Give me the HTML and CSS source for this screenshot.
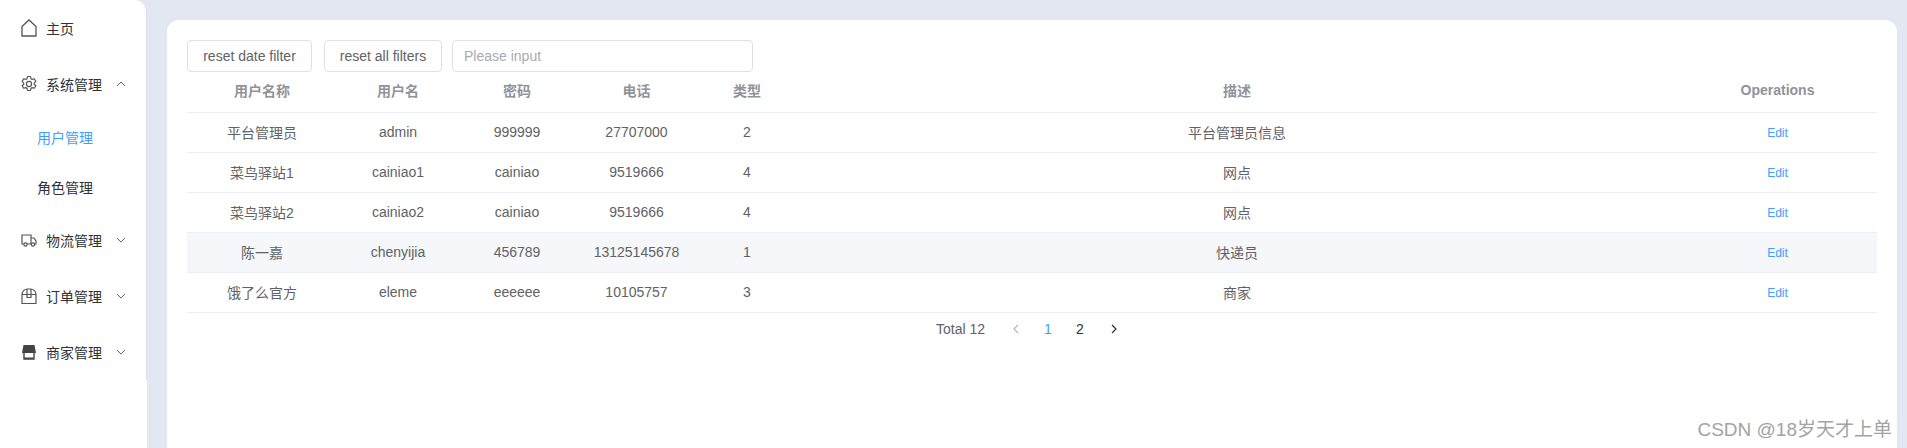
FILE: index.html
```html
<!DOCTYPE html>
<html lang="zh">
<head>
<meta charset="utf-8">
<title>用户管理</title>
<link rel="stylesheet" href="styles.css">
</head>
<body>
<div class="app">
  <aside class="side">
    <nav class="menu">
      <a class="item home">
        <svg class="ico" viewBox="0 0 16 18"><path d="M1 7.500 8 1l7 6.500V17H1z" fill="none" stroke="#555" stroke-width="1.300"/></svg>
        <span>主页</span>
      </a>
      <a class="item sys">
        <svg class="ico" viewBox="0.500 0.500 15 15"><path d="M6.600 1h2.800l.4 2 1.200.7 2-.6 1.400 2.400-1.500 1.400v1.300l1.500 1.400-1.400 2.400-2-.6-1.200.7-.4 2H6.600l-.4-2-1.200-.7-2 .6-1.400-2.400 1.500-1.400V7.200L1.600 5.500 3 3.100l2 .6 1.200-.7z" fill="none" stroke="#555" stroke-width="1.100" stroke-linejoin="round"/><circle cx="8" cy="8" r="2.400" fill="none" stroke="#555" stroke-width="1.100"/></svg>
        <span>系统管理</span>
        <svg class="arrow" viewBox="0 0 10 6"><path d="M1 5l4-4 4 4" fill="none" stroke="#666" stroke-width="1"/></svg>
      </a>
      <a class="sub active">用户管理</a>
      <a class="sub">角色管理</a>
      <a class="item log">
        <svg class="ico" viewBox="0 0 16 14"><path d="M3 11H1V2h9v9H6M10 5h3l2 3v3h-1.500M10 11h1" fill="none" stroke="#555" stroke-width="1.200"/><circle cx="4.500" cy="11.500" r="1.600" fill="none" stroke="#555" stroke-width="1.200"/><circle cx="12" cy="11.500" r="1.600" fill="none" stroke="#555" stroke-width="1.200"/></svg>
        <span>物流管理</span>
        <svg class="arrow" viewBox="0 0 10 6"><path d="M1 1l4 4 4-4" fill="none" stroke="#666" stroke-width="1"/></svg>
      </a>
      <a class="item ord">
        <svg class="ico" viewBox="0 0 16 17"><path d="M1 7a5.500 5.500 0 0 1 5.500-5.500h3A5.500 5.500 0 0 1 15 7v9H1zM1 7h14M6 1.500V10h4V1.500" fill="none" stroke="#555" stroke-width="1.200"/></svg>
        <span>订单管理</span>
        <svg class="arrow" viewBox="0 0 10 6"><path d="M1 1l4 4 4-4" fill="none" stroke="#666" stroke-width="1"/></svg>
      </a>
      <a class="item shop">
        <svg class="ico" viewBox="0 0 16 16"><path d="M2.500 1h11l1.500 8H1z" fill="#444"/><path d="M3 9v6h10V9" fill="none" stroke="#444" stroke-width="1.400"/><path d="M3 13.500h10V15H3z" fill="#444"/></svg>
        <span>商家管理</span>
        <svg class="arrow" viewBox="0 0 10 6"><path d="M1 1l4 4 4-4" fill="none" stroke="#666" stroke-width="1"/></svg>
      </a>
    </nav>
  </aside>
  <main class="main">
    <section class="card">
      <div class="toolbar">
        <button class="btn b1">reset date filter</button>
        <button class="btn b2">reset all filters</button>
        <input class="search" placeholder="Please input">
      </div>
      <table class="grid">
        <colgroup>
          <col class="c1"><col class="c2"><col class="c3"><col class="c4"><col class="c5"><col class="c6"><col class="c7">
        </colgroup>
        <thead>
          <tr><th>用户名称</th><th>用户名</th><th>密码</th><th>电话</th><th>类型</th><th>描述</th><th>Operations</th></tr>
        </thead>
        <tbody>
          <tr><td>平台管理员</td><td>admin</td><td>999999</td><td>27707000</td><td>2</td><td>平台管理员信息</td><td><a class="edit">Edit</a></td></tr>
          <tr><td>菜鸟驿站1</td><td>cainiao1</td><td>cainiao</td><td>9519666</td><td>4</td><td>网点</td><td><a class="edit">Edit</a></td></tr>
          <tr><td>菜鸟驿站2</td><td>cainiao2</td><td>cainiao</td><td>9519666</td><td>4</td><td>网点</td><td><a class="edit">Edit</a></td></tr>
          <tr class="hover"><td>陈一嘉</td><td>chenyijia</td><td>456789</td><td>13125145678</td><td>1</td><td>快递员</td><td><a class="edit">Edit</a></td></tr>
          <tr><td>饿了么官方</td><td>eleme</td><td>eeeeee</td><td>10105757</td><td>3</td><td>商家</td><td><a class="edit">Edit</a></td></tr>
        </tbody>
      </table>
      <div class="pager">
        <span class="total">Total 12</span>
        <svg class="pg prev" viewBox="0 0 6 10"><path d="M5 1 1 5l4 4" fill="none" stroke="#b5b7bc" stroke-width="1.200"/></svg>
        <span class="num on">1</span>
        <span class="num">2</span>
        <svg class="pg next" viewBox="0 0 6 10"><path d="M1 1l4 4-4 4" fill="none" stroke="#303133" stroke-width="1.200"/></svg>
      </div>
      <div class="mark">CSDN @18岁天才上单</div>
    </section>
  </main>
</div>
</body>
</html>
```
FILE: styles.css
```css
* { box-sizing: border-box; }
html, body { margin: 0; height: 448px; overflow: hidden; }
body {
  background: #e3e7f1;
  font-family: "Liberation Sans", "Noto Sans CJK SC", sans-serif;
  color: #303133;
}
.app { display: flex; height: 448px; }
.side {
  width: 147px;
  flex: none;
  background: #fff;
  border-top-right-radius: 12px;
}
.menu {
  height: 380px;
  border-right: 1px solid #dcdfe6;
  border-top-right-radius: 12px;
  display: flex;
  flex-direction: column;
}
.item {
  display: flex;
  align-items: center;
  height: 56px;
  padding-left: 21px;
  font-size: 14px;
  color: #303133;
}
.item .ico { width: 16px; height: 18px; margin-right: 9px; flex: none; }
.item span { width: 56px; white-space: nowrap; }
.item .arrow { width: 10px; height: 6px; margin-left: 14px; }
.sub {
  display: flex;
  align-items: center;
  height: 50px;
  padding-left: 37px;
  font-size: 14px;
  color: #303133;
}
.sub.active { color: #409eff; }
.main { flex: 1; padding: 20px 10px 0 20px; min-width: 0; }
.card {
  position: relative;
  height: 428px;
  background: #fff;
  border-radius: 12px 12px 0 0;
  padding: 20px 20px 0;
}
.toolbar { display: flex; height: 32px; }
.btn {
  height: 32px;
  padding: 0;
  background: #fff;
  border: 1px solid #dcdfe6;
  border-radius: 4px;
  font: 14px "Liberation Sans", sans-serif;
  color: #606266;
}
.b1 { width: 125px; margin-right: 12px; }
.b2 { width: 118px; margin-right: 10px; }
.search {
  width: 301px;
  height: 32px;
  padding: 0 11px;
  border: 1px solid #dcdfe6;
  border-radius: 4px;
  font: 14px "Liberation Sans", sans-serif;
  color: #606266;
  outline: none;
}
.search::placeholder { color: #a8abb2; opacity: 1; }
.grid {
  width: 1690px;
  border-collapse: collapse;
  table-layout: fixed;
  font-size: 14px;
  color: #606266;
}
.c1 { width: 150px; }
.c2 { width: 122px; }
.c3 { width: 116px; }
.c4 { width: 123px; }
.c5 { width: 98px; }
.c6 { width: 882px; }
.c7 { width: 199px; }
th, td {
  height: 40px;
  padding: 0;
  text-align: center;
  border-bottom: 1px solid #ebeef5;
  font-weight: 400;
}
th {
  padding-bottom: 4px;
  font-weight: 700;
  color: #909399;
}
.hover td { background: #f5f7fa; }
.edit { font-size: 12px; color: #409eff; }
.pager {
  display: flex;
  align-items: center;
  height: 32px;
  padding-left: 749px;
  font-size: 14px;
  color: #606266;
}
.total { width: 77px; }
.pg { width: 6px; height: 10px; flex: none; }
.prev { margin-right: 13px; }
.num { width: 32px; text-align: center; color: #303133; }
.num.on { color: #409eff; }
.next { margin-left: 15px; }
.mark {
  position: absolute;
  right: 5px;
  bottom: 7px;
  font-size: 19px;
  color: #a3a3a3;
  white-space: nowrap;
}
```
